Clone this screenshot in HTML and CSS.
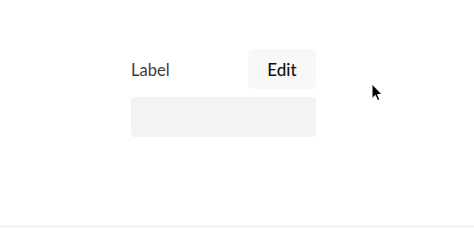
FILE: index.html
```html
<!DOCTYPE html>
<html>
<head>
<meta charset="utf-8">
<link rel="stylesheet" href="styles.css">
</head>
<body>
<div class="page">
  <div class="field">
    <div class="field-head">
      <span class="label">Label</span>
      <button class="edit">Edit</button>
    </div>
    <div class="input"></div>
  </div>
</div>
<svg class="cursor" width="13" height="19" viewBox="0 0 13 19">
  <path d="M1 1 L1 15.5 L4.3 12.4 L6.6 17.6 L8.8 16.6 L6.5 11.5 L11 11.5 Z" fill="#000" stroke="#fff" stroke-width="1" stroke-linejoin="round"/>
</svg>
<div class="bottom-line"></div>
</body>
</html>
```
FILE: styles.css
```css
html, body {
  margin: 0;
  padding: 0;
  background: #fff;
  width: 474px;
  height: 228px;
  overflow: hidden;
  font-family: "Lato", "Noto Sans", sans-serif;
}
.page {
  padding: 49px 0 0 131px;
}
.field {
  width: 185px;
  display: flex;
  flex-direction: column;
  gap: 8px;
}
.field-head {
  display: flex;
  align-items: center;
  justify-content: space-between;
  height: 40px;
}
.label {
  font-size: 16.5px;
  color: #3d3d3d;
  padding-top: 2px;
}
.edit {
  width: 68px;
  height: 40px;
  border: none;
  border-radius: 6px;
  background: #f8f8f8;
  font-family: "Lato", "Noto Sans", sans-serif;
  font-size: 17px;
  font-weight: 500;
  color: #111;
  padding: 0;
  cursor: pointer;
}
.input {
  height: 40px;
  border-radius: 4px;
  background: #f3f3f3;
}
.cursor {
  position: absolute;
  left: 371px;
  top: 83px;
}
.bottom-line {
  position: absolute;
  left: 0;
  top: 225px;
  width: 474px;
  height: 3px;
  background: #f6f6f6;
}
```
